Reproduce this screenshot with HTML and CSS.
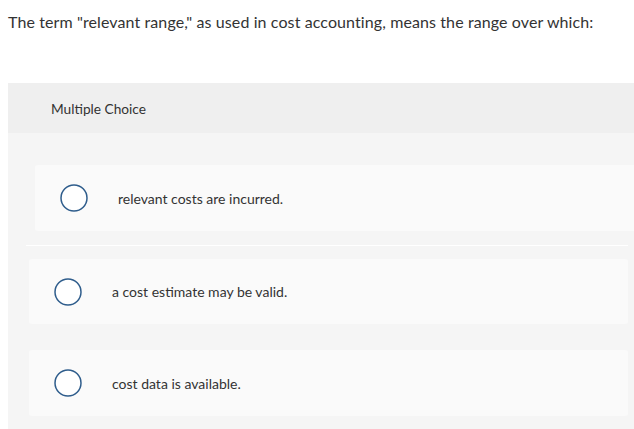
FILE: index.html
```html
<!DOCTYPE html>
<html>
<head>
<meta charset="utf-8">
<link rel="stylesheet" href="styles.css">
</head>
<body>
<div class="page">
  <p class="question">The term "relevant range," as used in cost accounting, means the range over which:</p>
  <div class="panel">
    <div class="panel-header">Multiple Choice</div>
    <div class="panel-body">
      <div class="choice choice-active">
        <svg class="radio" width="28" height="28" viewBox="0 0 28 28"><circle cx="14" cy="14" r="13" fill="#fff" stroke="#2f5d8c" stroke-width="1.5"/></svg>
        <span class="choice-text">relevant costs are incurred.</span>
      </div>
      <div class="separator"></div>
      <div class="choice">
        <svg class="radio" width="28" height="28" viewBox="0 0 28 28"><circle cx="14" cy="14" r="13" fill="#fff" stroke="#2f5d8c" stroke-width="1.5"/></svg>
        <span class="choice-text">a cost estimate may be valid.</span>
      </div>
      <div class="choice choice-last">
        <svg class="radio" width="28" height="28" viewBox="0 0 28 28"><circle cx="14" cy="14" r="13" fill="#fff" stroke="#2f5d8c" stroke-width="1.5"/></svg>
        <span class="choice-text">cost data is available.</span>
      </div>
    </div>
  </div>
</div>
</body>
</html>
```

FILE: styles.css
```css
html, body {
  margin: 0;
  padding: 0;
  background: #fff;
  overflow: hidden;
}
.page {
  padding-left: 8px;
  font-family: Lato, "Liberation Sans", sans-serif;
  color: #333;
}
.question {
  margin: 0;
  padding-top: 12px;
  font-size: 16px;
  letter-spacing: 0.1px;
  line-height: 20px;
  height: 71px;
}
.panel {
  background: #f5f5f5;
}
.panel-header {
  height: 50px;
  background: #efefef;
  padding-left: 43px;
  display: flex;
  align-items: center;
  font-size: 13.7px;
}
.panel-body {
  padding: 32px 6px 30px 21px;
}
.choice {
  height: 65px;
  background: #fafafa;
  border-radius: 3px;
  display: flex;
  align-items: center;
  padding-left: 25px;
  font-size: 14px;
}
.choice-active {
  height: 66px;
  margin-left: 6px;
  margin-right: -12px;
}
.choice-last {
  height: 66px;
  margin-top: 26px;
}
.radio {
  flex: none;
  display: block;
}
.choice-text {
  margin-left: 30px;
}
.separator {
  height: 1px;
  background: #fff;
  margin: 14px 0 13px -3px;
}
```
